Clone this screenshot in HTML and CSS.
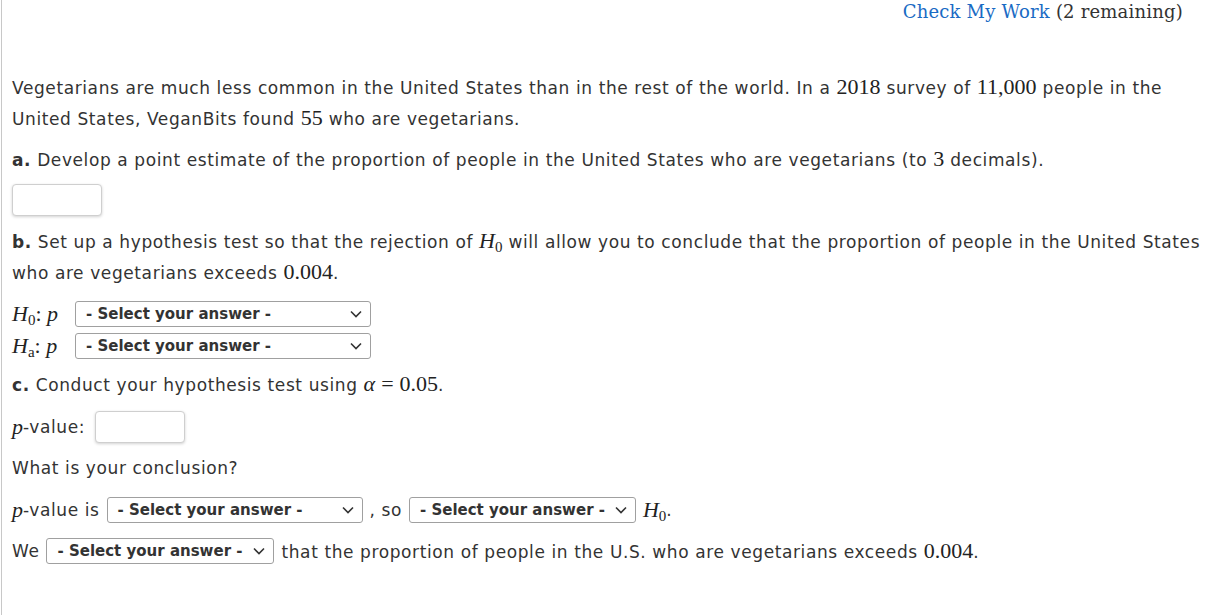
FILE: index.html
```html
<!DOCTYPE html>
<html lang="en">
<head>
<meta charset="utf-8">
<title>Vegetarians hypothesis test</title>
<link rel="stylesheet" href="styles.css">
</head>
<body>
<div class="page">
  <div class="header">
    <a class="check" href="#">Check My Work</a> <span class="remaining">(2 remaining)</span>
  </div>

  <p class="para intro">Vegetarians are much less common in the United States than in the rest of the world. In a <span class="m">2018</span> survey of <span class="m">11,000</span> people in the<br>United States, VeganBits found <span class="m">55</span> who are vegetarians.</p>

  <p class="para qa"><b>a.</b> Develop a point estimate of the proportion of people in the United States who are vegetarians (to <span class="m">3</span> decimals).</p>

  <div class="row r-input"><input class="box" type="text" aria-label="point estimate"></div>

  <p class="para qb"><b>b.</b> Set up a hypothesis test so that the rejection of <span class="m"><i>H</i><sub>0</sub></span> will allow you to conclude that the proportion of people in the United States<br>who are vegetarians exceeds <span class="m">0.004</span>.</p>

  <div class="hyp">
    <div class="hrow">
      <span class="m lbl"><i>H</i><sub>0</sub>:&nbsp;<i>p</i></span>
      <span class="sel w296">- Select your answer -<svg class="chev" viewBox="0 0 12 8" width="12" height="8"><path d="M1 1.5 L6 6.5 L11 1.5" fill="none" stroke="#333" stroke-width="1.6"/></svg></span>
    </div>
    <div class="hrow">
      <span class="m lbl"><i>H</i><sub>a</sub>:&nbsp;<i>p</i></span>
      <span class="sel w296">- Select your answer -<svg class="chev" viewBox="0 0 12 8" width="12" height="8"><path d="M1 1.5 L6 6.5 L11 1.5" fill="none" stroke="#333" stroke-width="1.6"/></svg></span>
    </div>
  </div>

  <p class="para qc"><b>c.</b> Conduct your hypothesis test using <span class="m"><i>α</i><span class="op">=</span>0.05</span>.</p>

  <div class="row r-pval"><span class="m"><i>p</i></span>-value:<input class="box gap-l" type="text" aria-label="p-value"></div>

  <p class="para qw">What is your conclusion?</p>

  <div class="row r-concl">
    <span class="m"><i>p</i></span>-value is<span class="sel w256 gap-l">- Select your answer -<svg class="chev" viewBox="0 0 12 8" width="12" height="8"><path d="M1 1.5 L6 6.5 L11 1.5" fill="none" stroke="#333" stroke-width="1.6"/></svg></span><span class="gap-l">, so</span><span class="sel w227 gap-l">- Select your answer -<svg class="chev" viewBox="0 0 12 8" width="12" height="8"><path d="M1 1.5 L6 6.5 L11 1.5" fill="none" stroke="#333" stroke-width="1.6"/></svg></span><span class="m gap-l"><i>H</i><sub>0</sub></span>.
  </div>

  <div class="row r-we">
    We<span class="sel w228 gap-l">- Select your answer -<svg class="chev" viewBox="0 0 12 8" width="12" height="8"><path d="M1 1.5 L6 6.5 L11 1.5" fill="none" stroke="#333" stroke-width="1.6"/></svg></span><span class="gap-l">that the proportion of people in the U.S. who are vegetarians exceeds <span class="m">0.004</span>.</span>
  </div>
</div>
</body>
</html>
```

FILE: styles.css
```css
html, body {
  margin: 0;
  padding: 0;
  background: #fff;
}

.page {
  margin-left: 1px;
  border-left: 1px solid #c8c8c8;
  min-height: 615px;
  box-sizing: border-box;
  padding: 0 12px 0 10px;
  font-family: "DejaVu Sans", Verdana, sans-serif;
  font-size: 17px;
  letter-spacing: 0.6px;
  color: #333;
}

.header {
  text-align: right;
  padding-right: 18px;
  height: 24px;
  line-height: 24px;
  font-family: "DejaVu Serif", Georgia, serif;
  font-size: 18px;
  letter-spacing: 0.2px;
}

.check {
  color: #1a6bc4;
  text-decoration: none;
}

.remaining {
  color: #333;
}

.para {
  margin: 0;
  line-height: 31px;
  white-space: nowrap;
}

.intro { margin-top: 49px; }
.qa { margin-top: 10px; }
.r-input { margin-top: 8px; height: 32px; }
.qb { margin-top: 11px; }
.hyp { margin-top: 9px; }
.qc { margin-top: 8px; }
.r-pval { margin-top: 10px; height: 32px; }
.qw { margin-top: 10px; }
.r-concl { margin-top: 10px; height: 31px; }
.r-we { margin-top: 10px; height: 31px; }

.para b {
  font-weight: bold;
}

.m {
  font-family: "Liberation Serif", "Times New Roman", serif;
  font-size: 22px;
  line-height: 1;
  letter-spacing: 0;
  color: #222;
}

.m i {
  font-style: italic;
}

.m sub {
  font-size: 15px;
  vertical-align: -4px;
  line-height: 0;
}

.op {
  margin: 0 6px;
}

.row {
  display: flex;
  align-items: center;
  white-space: nowrap;
}

.gap-l {
  margin-left: 7px;
}

.hrow {
  display: flex;
  align-items: center;
  height: 32px;
}

.lbl {
  display: inline-block;
  width: 63px;
}

.box {
  width: 90px;
  height: 32px;
  box-sizing: border-box;
  border: 1px solid #cfcfcf;
  border-radius: 4px;
  box-shadow: 0 1px 3px rgba(0, 0, 0, 0.18);
  background: #fff;
  margin: 0;
  padding: 0 6px;
  font: inherit;
}

.box.gap-l {
  margin-left: 10px;
}

.sel {
  position: relative;
  display: inline-flex;
  align-items: center;
  box-sizing: border-box;
  height: 26px;
  padding-left: 10px;
  border: 1px solid #a0a0a0;
  border-radius: 3px;
  background: #fff;
  font-family: "DejaVu Sans", Verdana, sans-serif;
  font-weight: bold;
  font-size: 15px;
  letter-spacing: 0;
  color: #333;
}

.chev {
  position: absolute;
  right: 8px;
  top: 8px;
}

.w296 { width: 296px; }
.w256 { width: 256px; }
.w227 { width: 227px; }
.w228 { width: 228px; }
```
